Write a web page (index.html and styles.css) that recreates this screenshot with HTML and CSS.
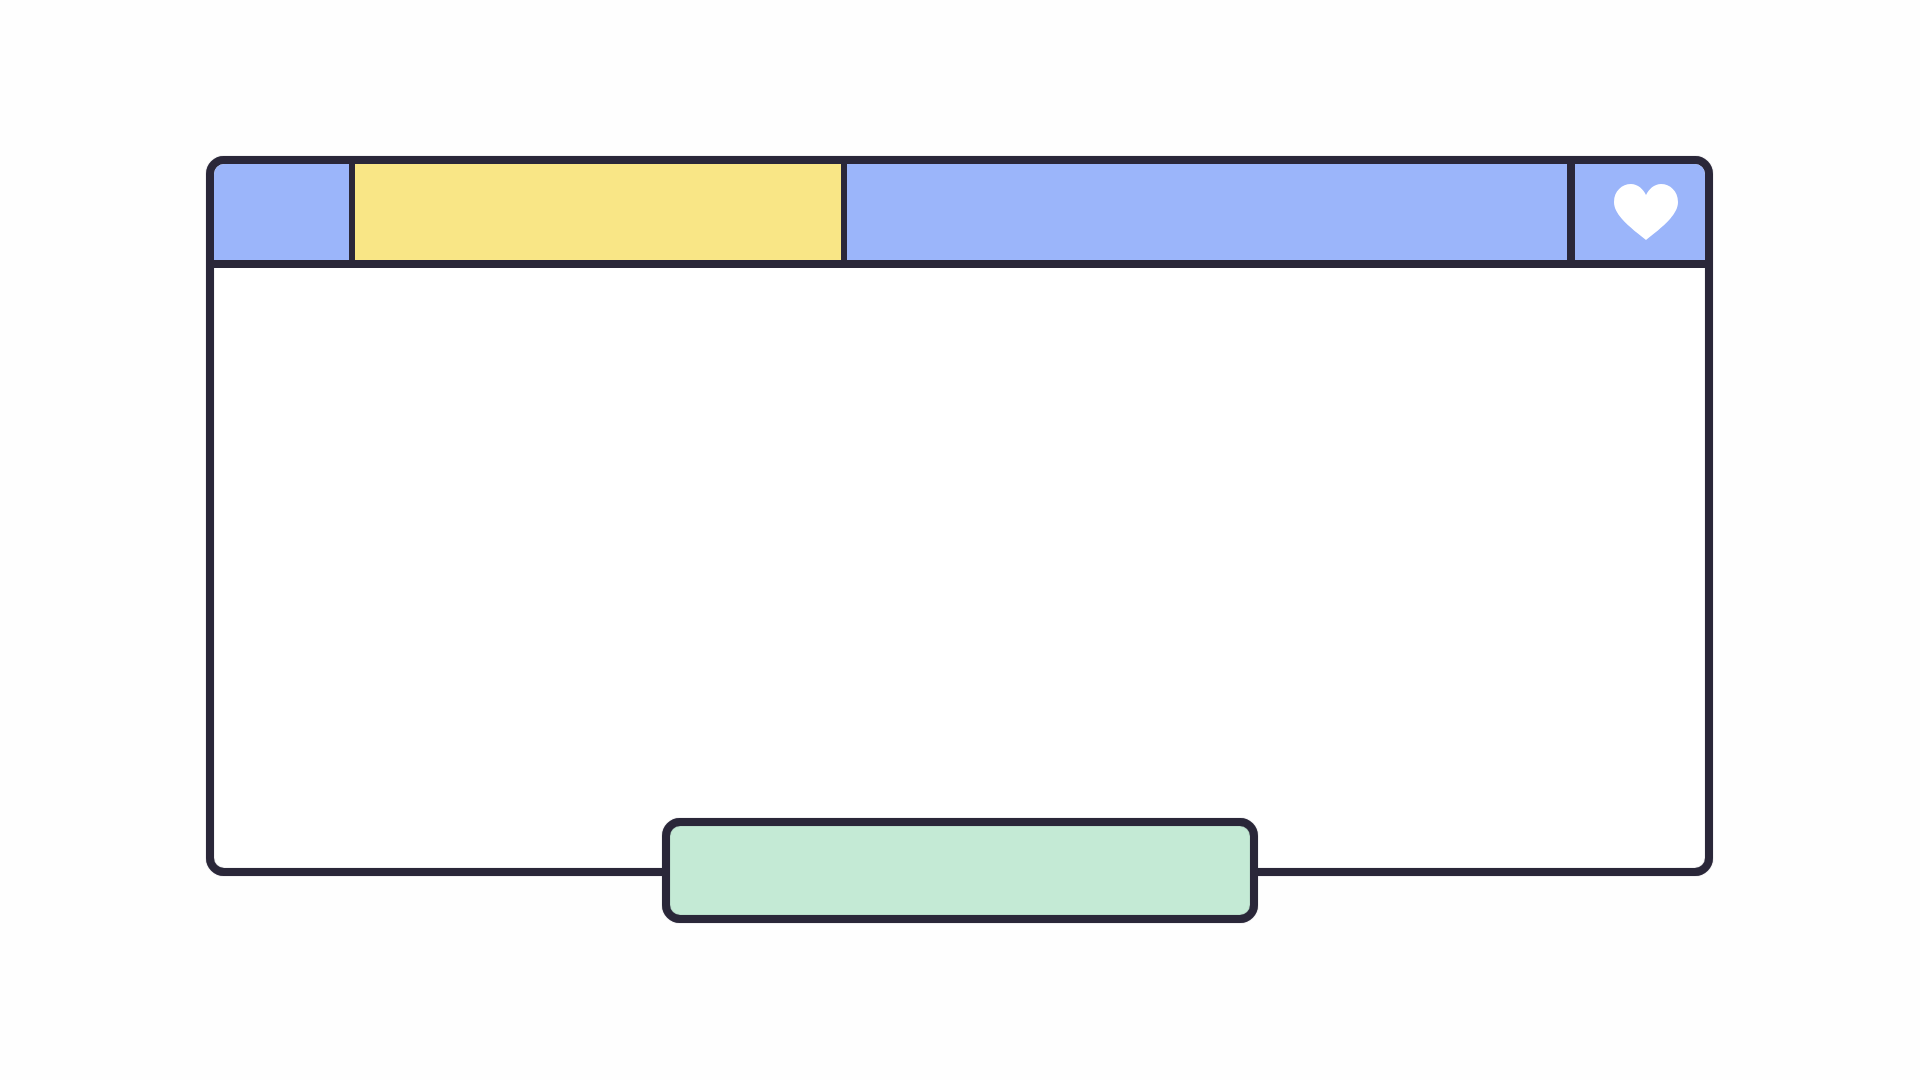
FILE: index.html
```html
<!DOCTYPE html>
<html lang="en">
<head>
<meta charset="utf-8">
<title>Window</title>
<link rel="stylesheet" href="styles.css">
</head>
<body>
<main class="canvas">
  <section class="frame">
    <header class="bar">
      <div class="cell cell-start"></div>
      <div class="cell cell-tab"></div>
      <div class="cell cell-fill"></div>
      <div class="cell cell-end">
        <svg class="heart" viewBox="0 0 64 56" aria-hidden="true">
          <path d="M32 56C26 51 15 43 8 35C3 29 0 24 0 18C0 7 8 0 17 0C24 0 29 5 32 11C35 5 40 0 47 0C56 0 64 7 64 18C64 24 61 29 56 35C49 43 38 51 32 56Z"/>
        </svg>
      </div>
    </header>
    <div class="pill"></div>
  </section>
</main>
</body>
</html>
```
FILE: styles.css
```css
html, body {
  margin: 0;
  height: 100%;
  background: #fefefe;
}

.canvas {
  box-sizing: border-box;
  width: 1920px;
  height: 1080px;
  padding: 156px 0 0 206px;
  overflow: hidden;
}

.frame {
  position: relative;
  box-sizing: border-box;
  width: 1507px;
  height: 720px;
  border: 8px solid #2a2739;
  border-radius: 18px;
  background: #ffffff;
  box-shadow: 0 0 1px rgba(42, 39, 57, 0.6), inset 0 0 1px rgba(42, 39, 57, 0.6);
}

.bar {
  display: flex;
  box-sizing: border-box;
  height: 104px;
  border-bottom: 8px solid #2a2739;
  border-radius: 10px 10px 0 0;
  overflow: hidden;
  background: #9bb5fa;
}

.cell {
  flex: none;
  height: 100%;
}

.cell-start {
  width: 135px;
}

.cell-tab {
  box-sizing: border-box;
  width: 498px;
  border-left: 6px solid #2a2739;
  border-right: 6px solid #2a2739;
  background: #f9e686;
}

.cell-fill {
  flex: 1;
}

.cell-end {
  display: flex;
  box-sizing: border-box;
  width: 138px;
  border-left: 8px solid #2a2739;
  padding: 20px 0 0 39px;
}

.heart {
  width: 64px;
  height: 56px;
  fill: #ffffff;
}

.pill {
  position: absolute;
  left: 448px;
  bottom: -55px;
  box-sizing: border-box;
  width: 596px;
  height: 105px;
  border: 8px solid #2a2739;
  border-radius: 18px;
  background: #c4ead5;
  box-shadow: 0 0 1px rgba(42, 39, 57, 0.6), inset 0 0 1px rgba(42, 39, 57, 0.6);
}
```
